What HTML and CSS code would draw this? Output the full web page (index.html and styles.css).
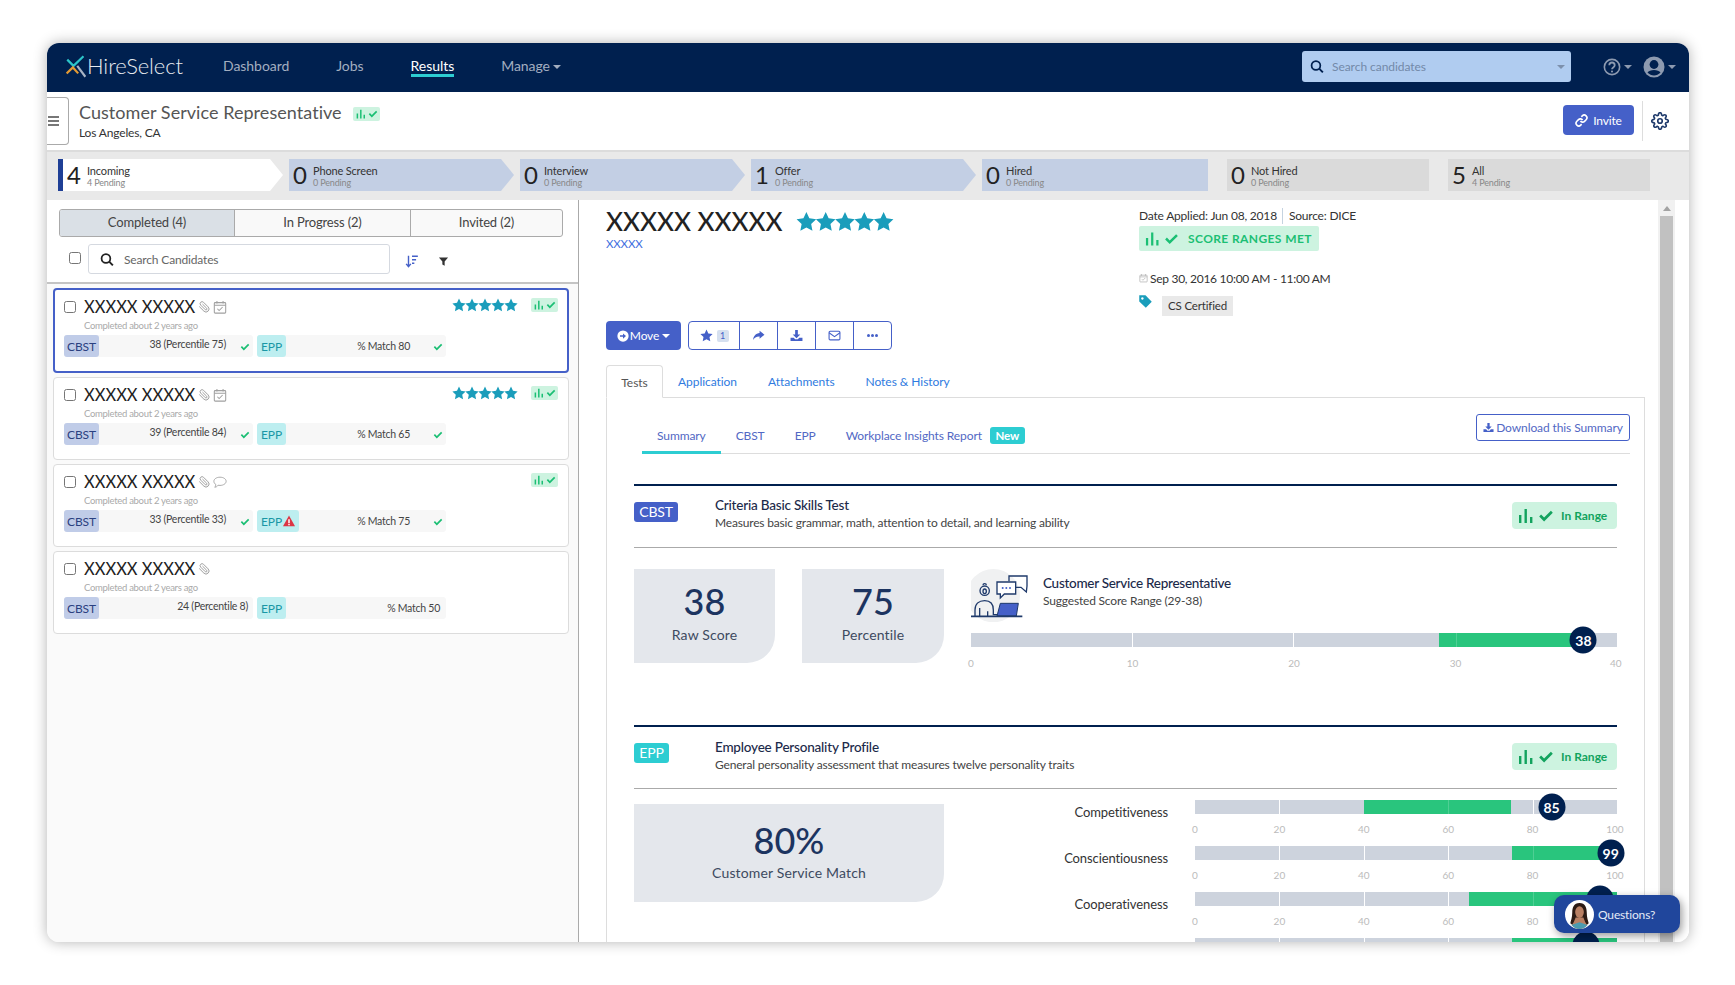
FILE: index.html
```html
<!DOCTYPE html>
<html lang="en">
<head>
<meta charset="utf-8">
<title>HireSelect</title>
<link rel="stylesheet" href="styles.css">
</head>
<body>
<svg class="sprite" aria-hidden="true">
  <symbol id="star" viewBox="0 0 24 24"><path d="M12 1l3.4 7.3 7.9 1-5.8 5.5 1.5 7.9L12 18.8l-7 3.9 1.5-7.9L.7 9.3l7.9-1z"/></symbol>
  <symbol id="bars" viewBox="0 0 16 16"><path d="M1 7h2.4v8H1zM6.5 1h2.4v14H6.5zM12 9h2.4v6H12z"/></symbol>
  <symbol id="check" viewBox="0 0 16 16"><path d="M1.2 8.4l1.9-1.9 3 3L12.900 2.800l1.900 1.900-8.700 8.700z"/></symbol>
  <symbol id="search" viewBox="0 0 16 16"><circle cx="6.800" cy="6.800" r="5" fill="none" stroke="currentColor" stroke-width="2"/><path d="M10.500 10.500l4.200 4.200" stroke="currentColor" stroke-width="2.200"/></symbol>
  <symbol id="clip" viewBox="0 0 24 24"><path fill="none" stroke="currentColor" stroke-width="2" transform="matrix(-1 0 0 1 24 0)" d="M21.440 11.050l-9.190 9.190a6 6 0 0 1-8.490-8.490l9.190-9.190a4 4 0 0 1 5.660 5.660l-9.200 9.190a2 2 0 0 1-2.830-2.830l8.490-8.480"/></symbol>
  <symbol id="cal" viewBox="0 0 16 16"><g fill="none" stroke="currentColor" stroke-width="1.200"><rect x="1.500" y="3" width="13" height="12" rx="1"/><path d="M1.500 6h13M4.500 1v3M11.500 1v3M5 10l2 2 4-4"/></g></symbol>
  <symbol id="bubble" viewBox="0 0 16 16"><path fill="none" stroke="currentColor" stroke-width="1" d="M8 2.500c3.800 0 7 2 7 4.700s-3.200 4.700-7 4.700c-.8 0-1.500-.1-2.200-.2C5 13 3.500 14 2 14c.8-.8 1.300-2 1.300-3C1.900 10 1 8.700 1 7.200 1 4.500 4.200 2.500 8 2.500z"/></symbol>
  <symbol id="link" viewBox="0 0 24 24"><g fill="none" stroke="currentColor" stroke-width="3"><path d="M10 13a5 5 0 0 0 7.540.54l3-3a5 5 0 0 0-7.070-7.070l-1.720 1.710"/><path d="M14 11a5 5 0 0 0-7.540-.54l-3 3a5 5 0 0 0 7.070 7.070l1.710-1.710"/></g></symbol>
  <symbol id="gear" viewBox="0 0 24 24"><g fill="none" stroke="currentColor" stroke-width="2.200"><circle cx="12" cy="12" r="3"/><path d="M19.400 15a1.650 1.650 0 0 0 .33 1.820l.06.06a2 2 0 0 1 0 2.830 2 2 0 0 1-2.830 0l-.06-.06a1.650 1.650 0 0 0-1.820-.33 1.650 1.650 0 0 0-1 1.510V21a2 2 0 0 1-2 2 2 2 0 0 1-2-2v-.09A1.650 1.650 0 0 0 9 19.400a1.650 1.650 0 0 0-1.820.33l-.06.06a2 2 0 0 1-2.830 0 2 2 0 0 1 0-2.830l.06-.06a1.650 1.650 0 0 0 .33-1.820 1.650 1.650 0 0 0-1.510-1H3a2 2 0 0 1-2-2 2 2 0 0 1 2-2h.09A1.650 1.650 0 0 0 4.600 9a1.650 1.650 0 0 0-.33-1.820l-.06-.06a2 2 0 0 1 0-2.830 2 2 0 0 1 2.830 0l.06.06a1.650 1.650 0 0 0 1.820.33H9a1.650 1.650 0 0 0 1-1.510V3a2 2 0 0 1 2-2 2 2 0 0 1 2 2v.09a1.650 1.650 0 0 0 1 1.510 1.650 1.650 0 0 0 1.820-.33l.06-.06a2 2 0 0 1 2.830 0 2 2 0 0 1 0 2.830l-.06.06a1.650 1.650 0 0 0-.33 1.820V9a1.650 1.650 0 0 0 1.510 1H21a2 2 0 0 1 2 2 2 2 0 0 1-2 2h-.09a1.650 1.650 0 0 0-1.510 1z"/></g></symbol>
  <symbol id="download" viewBox="0 0 24 24"><path d="M9.500 2h5v8H19l-7 7-7-7h4.500zM1 16h6l2.500 3h5l2.500-3h6v6H1z"/></symbol>
  <symbol id="share" viewBox="0 0 24 24"><path d="M14 3l9 7.500-9 7.500v-4.300C8 13.500 4.500 15.500 2 20.500 2.500 13 7 8 14 7.300z"/></symbol>
  <symbol id="mail" viewBox="0 0 24 24"><g fill="none" stroke="currentColor" stroke-width="2"><rect x="2" y="4" width="20" height="16" rx="2"/><path d="M2 7l10 7 10-7"/></g></symbol>
  <symbol id="tag" viewBox="0 0 24 24"><path d="M2 2h10l10 10.500L12.500 22 2 12zM7 5a2 2 0 1 0 .01 0z"/></symbol>
  <symbol id="filter" viewBox="0 0 24 24"><path d="M2 3h20l-7.500 9v9.500l-5-3V12z"/></symbol>
  <symbol id="sort" viewBox="0 0 24 24"><path d="M6 2v18M2 16l4 5 4-5M12 3h10M12 9h7M12 15h4" fill="none" stroke="currentColor" stroke-width="2.400"/></symbol>
  <symbol id="warn" viewBox="0 0 16 16"><path fill="#dc3545" d="M8 .8L16 15H0z"/><path fill="#fff" d="M7 5.500h2v5H7zM7 11.500h2v2H7z"/></symbol>
  <symbol id="rating" viewBox="0 0 66 14"><g><use href="#star" width="14" height="14"/><use href="#star" x="13" width="14" height="14"/><use href="#star" x="26" width="14" height="14"/><use href="#star" x="39" width="14" height="14"/><use href="#star" x="52" width="14" height="14"/></g></symbol>
</svg>

<div class="window">
  <header class="nav">
    <a class="logo">
      <svg class="logo-mark" viewBox="0 0 64 72"><g fill="none" stroke-width="7"><path d="M4 14l20 20L56 3" stroke="#2cc4c9"/><path d="M2 58l20-19 17 19" stroke="#e39a33"/><path d="M36 34l26 35" stroke="#a9b4c4"/></g></svg>
      <span class="logo-text">HireSelect</span>
    </a>
    <a class="nav-link">Dashboard</a>
    <a class="nav-link">Jobs</a>
    <a class="nav-link nav-link--active">Results</a>
    <a class="nav-link nav-link--caret">Manage<i class="caret"></i></a>
    <div class="global-search">
      <svg class="global-search__icon"><use href="#search"/></svg>
      <span class="global-search__text">Search candidates</span>
      <i class="caret caret--dim"></i>
    </div>
    <div class="nav-icons">
      <span class="nav-icon"><svg class="help" viewBox="0 0 20 20"><circle cx="10" cy="10" r="8.500" fill="none" stroke="currentColor" stroke-width="1.800"/><path d="M7 8c0-4 6-4 6 0 0 2.500-3 2.500-3 4.500" fill="none" stroke="currentColor" stroke-width="2"/><circle cx="10" cy="15" r="1.200" fill="currentColor"/></svg><i class="caret"></i></span>
      <span class="nav-icon"><svg class="user" viewBox="0 0 22 22"><circle cx="11" cy="11" r="10.500" fill="currentColor"/><circle cx="11" cy="8.500" r="4.400" fill="#00204f"/><path d="M4.500 16.500c1.800-3.500 11.200-3.500 13 0-1.800 2-4.200 3-6.500 3s-4.700-1-6.500-3z" fill="#00204f"/></svg><i class="caret"></i></span>
    </div>
  </header>

  <section class="subhead">
    <button class="menu-toggle"><i></i><i></i><i></i></button>
    <div class="subhead__title">
      <h1 class="job-title">Customer Service Representative <span class="range-chip"><svg><use href="#bars"/></svg><svg><use href="#check"/></svg></span></h1>
      <p class="job-place">Los Angeles, CA</p>
    </div>
    <button class="invite"><svg><use href="#link"/></svg>Invite</button>
    <div class="gear-wrap"><svg class="gear"><use href="#gear"/></svg></div>
  </section>

  <nav class="steps">
    <div class="step step--arrow step--current"><b class="step__n">4</b><div><div class="step__l">Incoming</div><div class="step__s">4 Pending</div></div></div>
    <div class="step step--arrow"><b class="step__n">0</b><div><div class="step__l">Phone Screen</div><div class="step__s">0 Pending</div></div></div>
    <div class="step step--arrow"><b class="step__n">0</b><div><div class="step__l">Interview</div><div class="step__s">0 Pending</div></div></div>
    <div class="step step--arrow"><b class="step__n">1</b><div><div class="step__l">Offer</div><div class="step__s">0 Pending</div></div></div>
    <div class="step step--hired"><b class="step__n">0</b><div><div class="step__l">Hired</div><div class="step__s">0 Pending</div></div></div>
    <div class="step step--grey step--sep"><b class="step__n">0</b><div><div class="step__l">Not Hired</div><div class="step__s">0 Pending</div></div></div>
    <div class="step step--grey step--sep"><b class="step__n">5</b><div><div class="step__l">All</div><div class="step__s">4 Pending</div></div></div>
  </nav>

  <main class="main">
    <aside class="list-pane">
      <div class="list-tools">
        <div class="seg">
          <button class="seg__b seg__b--on">Completed (4)</button>
          <button class="seg__b">In Progress (2)</button>
          <button class="seg__b">Invited (2)</button>
        </div>
        <div class="list-search">
          <input class="cb" type="checkbox">
          <div class="search-box"><svg><use href="#search"/></svg><span>Search Candidates</span></div>
          <svg class="tool tool--sort"><use href="#sort"/></svg>
          <svg class="tool tool--filter"><use href="#filter"/></svg>
        </div>
      </div>
      <div class="cards">
        <article class="card card--on">
          <div class="card__main">
            <div class="card__name"><input class="cb" type="checkbox"><span class="cname">XXXXX XXXXX</span><svg class="mini"><use href="#clip"/></svg><svg class="mini"><use href="#cal"/></svg></div>
            <div class="card__sub">Completed about 2 years ago</div>
            <div class="scores">
              <div class="score"><span class="chip chip--c">CBST</span><span class="score__v score__v--up">38 (Percentile 75)</span><svg class="ok"><use href="#check"/></svg></div>
              <div class="score"><span class="chip chip--e">EPP</span><span class="score__v">% Match 80</span><svg class="ok ok--e"><use href="#check"/></svg></div>
            </div>
          </div>
          <div class="card__side"><svg class="rating"><use href="#rating"/></svg><span class="range-chip range-chip--card"><svg><use href="#bars"/></svg><svg><use href="#check"/></svg></span></div>
        </article>
        <article class="card">
          <div class="card__main">
            <div class="card__name"><input class="cb" type="checkbox"><span class="cname">XXXXX XXXXX</span><svg class="mini"><use href="#clip"/></svg><svg class="mini"><use href="#cal"/></svg></div>
            <div class="card__sub">Completed about 2 years ago</div>
            <div class="scores">
              <div class="score"><span class="chip chip--c">CBST</span><span class="score__v score__v--up">39 (Percentile 84)</span><svg class="ok"><use href="#check"/></svg></div>
              <div class="score"><span class="chip chip--e">EPP</span><span class="score__v">% Match 65</span><svg class="ok ok--e"><use href="#check"/></svg></div>
            </div>
          </div>
          <div class="card__side"><svg class="rating"><use href="#rating"/></svg><span class="range-chip range-chip--card"><svg><use href="#bars"/></svg><svg><use href="#check"/></svg></span></div>
        </article>
        <article class="card">
          <div class="card__main">
            <div class="card__name"><input class="cb" type="checkbox"><span class="cname">XXXXX XXXXX</span><svg class="mini"><use href="#clip"/></svg><svg class="mini"><use href="#bubble"/></svg></div>
            <div class="card__sub">Completed about 2 years ago</div>
            <div class="scores">
              <div class="score"><span class="chip chip--c">CBST</span><span class="score__v score__v--up">33 (Percentile 33)</span><svg class="ok"><use href="#check"/></svg></div>
              <div class="score"><span class="chip chip--e">EPP<svg class="warn"><use href="#warn"/></svg></span><span class="score__v">% Match 75</span><svg class="ok ok--e"><use href="#check"/></svg></div>
            </div>
          </div>
          <div class="card__side card__side--end"><span class="range-chip range-chip--card"><svg><use href="#bars"/></svg><svg><use href="#check"/></svg></span></div>
        </article>
        <article class="card">
          <div class="card__main">
            <div class="card__name"><input class="cb" type="checkbox"><span class="cname">XXXXX XXXXX</span><svg class="mini"><use href="#clip"/></svg></div>
            <div class="card__sub">Completed about 2 years ago</div>
            <div class="scores">
              <div class="score"><span class="chip chip--c">CBST</span><span class="score__v score__v--up score__v--end">24 (Percentile 8)</span></div>
              <div class="score"><span class="chip chip--e">EPP</span><span class="score__v score__v--end">% Match 50</span></div>
            </div>
          </div>
        </article>
      </div>
    </aside>

    <div class="detail">
      <div class="detail__head">
        <div class="who">
          <div class="who__name"><h2 class="bigname">XXXXX XXXXX</h2><svg class="bigstars"><use href="#rating"/></svg></div>
          <a class="who__link">XXXXX</a>
        </div>
        <div class="facts">
          <div class="facts__line"><span class="facts__date">Date Applied: Jun 08, 2018</span><span>Source: DICE</span></div>
          <div class="ranges"><svg><use href="#bars"/></svg><svg><use href="#check"/></svg><span>SCORE RANGES MET</span></div>
          <div class="facts__when"><svg><use href="#cal"/></svg>Sep 30, 2016 10:00 AM - 11:00 AM</div>
          <div class="facts__tags"><svg><use href="#tag"/></svg><span class="tagchip">CS Certified</span></div>
        </div>
      </div>

      <div class="actions">
        <button class="move"><svg viewBox="0 0 16 16"><circle cx="8" cy="8" r="7.500" fill="#fff"/><path d="M4 7h4V4.500L12 8l-4 3.500V9H4z" fill="#4560c8"/></svg>Move<i class="caret caret--white"></i></button>
        <div class="btn-group">
          <button class="gbtn gbtn--star"><svg><use href="#star"/></svg><span class="count">1</span></button>
          <button class="gbtn"><svg><use href="#share"/></svg></button>
          <button class="gbtn"><svg><use href="#download"/></svg></button>
          <button class="gbtn"><svg><use href="#mail"/></svg></button>
          <button class="gbtn gbtn--last"><span class="dots"><i></i><i></i><i></i></span></button>
        </div>
      </div>

      <div class="tabs">
        <a class="tab tab--on">Tests</a>
        <a class="tab">Application</a>
        <a class="tab">Attachments</a>
        <a class="tab">Notes &amp; History</a>
      </div>

      <div class="panel">
        <div class="subtabs">
          <a class="subtab subtab--on">Summary</a>
          <a class="subtab">CBST</a>
          <a class="subtab">EPP</a>
          <a class="subtab">Workplace Insights Report<span class="new">New</span></a>
          <button class="dl"><svg><use href="#download"/></svg>Download this Summary</button>
        </div>

        <section class="sec sec--first">
          <div class="sec__head">
            <span class="sec__badge sec__badge--c">CBST</span>
            <div class="sec__txt"><h3>Criteria Basic Skills Test</h3><p>Measures basic grammar, math, attention to detail, and learning ability</p></div>
            <span class="inrange"><svg class="inrange__b"><use href="#bars"/></svg><svg class="inrange__c"><use href="#check"/></svg>In Range</span>
          </div>
          <div class="sec__body sec__body--cbst">
            <div class="stat stat--a"><b>38</b><span>Raw Score</span></div>
            <div class="stat stat--b"><b>75</b><span>Percentile</span></div>
            <div class="range">
              <div class="range__top">
                <svg class="agent" viewBox="18 20 174 162">
                  <circle cx="85" cy="103" r="80" fill="#f0f1f2"/>
                  <g fill="none" stroke="#1f3a6b" stroke-width="4">
                    <path d="M132 60V44h54v30l-2 18-16-14h-16"/>
                    <path d="M96 62h56v36h-34l-12 12v-12H96z" fill="#fff"/>
                    <circle cx="59" cy="88" r="14"/><path d="M54 72a4 4 0 0 1 10 0"/><ellipse cx="59" cy="90" rx="5" ry="7"/>
                    <path d="M30 164v-18c0-18 12-28 29-28s26 10 26 28v14h14M44 164v-24M68 150v14"/>
                  </g>
                  <path d="M106 126h54l-6 38h-58z" fill="#4560c8" stroke="#1f3a6b" stroke-width="3"/>
                  <path d="M18 165h154" stroke="#1f3a6b" stroke-width="5"/>
                  <g fill="#4560c8"><circle cx="113" cy="80" r="3"/><circle cx="124" cy="80" r="3"/><circle cx="135" cy="80" r="3"/></g>
                </svg>
                <div class="range__txt"><h4>Customer Service Representative</h4><p>Suggested Score Range (29-38)</p></div>
              </div>
              <div class="bar">
                <i class="tick" style="left:24.900%"></i><i class="tick" style="left:49.900%"></i>
                <i class="fill" style="left:72.500%;width:22.500%"></i>
                <i class="tick tick--faint" style="left:75%"></i>
                <i class="marker" style="left:94.800%">38</i>
              </div>
              <div class="scale">
                <span style="left:0%">0</span><span style="left:25%">10</span><span style="left:50%">20</span><span style="left:75%">30</span><span style="left:99.800%">40</span>
              </div>
            </div>
          </div>
        </section>

        <section class="sec">
          <div class="sec__head">
            <span class="sec__badge sec__badge--e">EPP</span>
            <div class="sec__txt"><h3>Employee Personality Profile</h3><p>General personality assessment that measures twelve personality traits</p></div>
            <span class="inrange"><svg class="inrange__b"><use href="#bars"/></svg><svg class="inrange__c"><use href="#check"/></svg>In Range</span>
          </div>
          <div class="sec__body sec__body--epp">
            <div class="stat stat--wide"><b>80%</b><span>Customer Service Match</span></div>
            <div class="traits">
              <div class="trait">
                <div class="trait__l">Competitiveness</div>
                <div class="trait__r">
                  <div class="bar">
                    <i class="tick" style="left:20%"></i><i class="tick" style="left:40%"></i><i class="tick" style="left:60%"></i><i class="tick" style="left:80%"></i>
                    <i class="fill" style="left:40%;width:35%"></i>
                    <i class="tick tick--faint" style="left:60%"></i>
                    <i class="marker" style="left:84.500%">85</i>
                  </div>
                  <div class="scale"><span style="left:0%">0</span><span style="left:20%">20</span><span style="left:40%">40</span><span style="left:60%">60</span><span style="left:80%">80</span><span style="left:99.500%">100</span></div>
                </div>
              </div>
              <div class="trait">
                <div class="trait__l">Conscientiousness</div>
                <div class="trait__r">
                  <div class="bar">
                    <i class="tick" style="left:20%"></i><i class="tick" style="left:40%"></i><i class="tick" style="left:60%"></i>
                    <i class="fill" style="left:75%;width:25%"></i>
                    <i class="tick tick--faint" style="left:80%"></i>
                    <i class="marker" style="left:98.500%">99</i>
                  </div>
                  <div class="scale"><span style="left:0%">0</span><span style="left:20%">20</span><span style="left:40%">40</span><span style="left:60%">60</span><span style="left:80%">80</span><span style="left:99.500%">100</span></div>
                </div>
              </div>
              <div class="trait">
                <div class="trait__l">Cooperativeness</div>
                <div class="trait__r">
                  <div class="bar">
                    <i class="tick" style="left:20%"></i><i class="tick" style="left:40%"></i><i class="tick" style="left:60%"></i>
                    <i class="fill" style="left:65%;width:35%"></i>
                    <i class="tick tick--faint" style="left:80%"></i>
                    <i class="marker" style="left:96%">96</i>
                  </div>
                  <div class="scale"><span style="left:0%">0</span><span style="left:20%">20</span><span style="left:40%">40</span><span style="left:60%">60</span><span style="left:80%">80</span></div>
                </div>
              </div>
              <div class="trait">
                <div class="trait__l"></div>
                <div class="trait__r">
                  <div class="bar">
                    <i class="tick" style="left:20%"></i><i class="tick" style="left:40%"></i><i class="tick" style="left:60%"></i>
                    <i class="fill" style="left:75%;width:25%"></i>
                    <i class="marker" style="left:92.600%"></i>
                  </div>
                </div>
              </div>
            </div>
          </div>
        </section>
      </div>
    </div>

    <div class="scrollbar"><i class="scrollbar__up"></i><i class="scrollbar__thumb"></i></div>
    <div class="rail"></div>
  </main>

  <button class="questions">
    <svg class="avatar" viewBox="0 0 30 30">
      <circle cx="15" cy="15" r="15" fill="#fff"/>
      <path d="M15 3c-6 0-7.500 5-7.500 10 0 5-1.500 9-2 11 3 3 7 5 10 5s6-2 9-5c-.5-2-2-6-2-11 0-5-1.500-10-7.500-10z" fill="#2b1a14"/>
      <ellipse cx="15" cy="12.500" rx="4.500" ry="6" fill="#b98064"/>
      <path d="M11 18h8l2 5 2 3c-2 2-5 4-8 4s-6-2-8-4l2-3z" fill="#b98064"/>
      <path d="M9 25l6-2 6 2 2 1c-2 2-5 4-8 4s-6-2-8-4z" fill="#4b9bb0"/>
    </svg>
    <span>Questions?</span>
  </button>
</div>
</body>
</html>
```
FILE: styles.css
```css
* { box-sizing: border-box; }
html, body { margin: 0; padding: 0; background: #fff; }
body { font-family: "Lato", "Open Sans", sans-serif; font-size: 12px; letter-spacing: -.16px; color: #222; height: 985px; overflow: hidden; }
h1, h2, h3, h4, p { margin: 0; font-weight: 400; }
button { font: inherit; letter-spacing: inherit; cursor: pointer; }
svg { display: block; }
.sprite { position: absolute; width: 0; height: 0; overflow: hidden; }

.window { position: relative; margin: 43px 46px 0 47px; height: 899px; border-radius: 12px; background: #fff; overflow: hidden; display: flex; flex-direction: column; box-shadow: 0 0 14px rgba(0,0,0,.3); }

/* top nav */
.nav { height: 49px; flex: none; background: #00204f; display: flex; align-items: center; color: #a3aec0; font-size: 14px; letter-spacing: -.05px; padding-left: 19px; }
.logo { display: flex; align-items: center; width: 157px; margin-top: -2px; }
.logo-mark { width: 20px; height: 23px; margin-right: 1px; }
.logo-text { font-size: 22px; line-height: 24px; font-weight: 300; color: #e6eaf0; letter-spacing: -.1px; margin-top: -2px; }
.nav-link { margin-right: 47px; height: 49px; line-height: 45px; position: relative; }
.nav-link--active { color: #fff; }
.nav-link--active::after { content: ""; position: absolute; left: 0; right: 0; top: 31px; height: 3px; background: #2dcdd2; }
.caret { display: inline-block; width: 0; height: 0; border: 4px solid transparent; border-top-color: currentColor; border-bottom: 0; margin-left: 3px; vertical-align: 2px; }
.caret--dim { color: #7d90ac; margin-left: auto; }
.caret--white { color: #fff; }
.global-search { margin-left: auto; margin-top: -2px; width: 269px; height: 31px; background: #b0ccf0; border-radius: 3px; display: flex; align-items: center; padding: 0 6px 0 8px; color: #00204f; }
.global-search__icon { width: 14px; height: 15px; }
.global-search__text { font-size: 12px; color: #7389a8; margin-left: 8px; }
.nav-icons { display: flex; align-items: center; width: 118px; padding-left: 32px; gap: 11px; color: #8d9ab0; margin-top: -2px; }
.nav-icon { display: flex; align-items: center; }
.help { width: 18px; height: 18px; }
.user { width: 22px; height: 22px; }

/* sub header */
.subhead { height: 60px; flex: none; border-bottom: 2px solid #dcdcdc; display: flex; align-items: center; position: relative; }
.menu-toggle { width: 22px; height: 48px; background: #fff; border: 1px solid #aaa; border-left: 0; border-radius: 0 4px 4px 0; padding: 0 0 0 1px; display: flex; flex-direction: column; gap: 2px; justify-content: center; }
.menu-toggle i { display: block; width: 11px; height: 2px; background: #777; }
.subhead__title { margin-left: 10px; margin-right: auto; }
.job-title { font-size: 18px; line-height: 22px; letter-spacing: .05px; color: #555; display: flex; align-items: center; gap: 2px; }
.job-place { font-size: 12px; line-height: 16px; color: #333; margin-top: 2px; }
.range-chip { display: inline-flex; align-items: center; gap: 2px; width: 27px; height: 14px; padding: 0 2px 0 3px; background: #cdf3e0; border-radius: 2px; color: #1bbf74; margin-left: 9px; margin-top: 4px; }
.range-chip svg { width: 10px; height: 10px; fill: currentColor; }
.invite { width: 71px; height: 30px; background: #4560c8; color: #fff; border: 0; border-radius: 4px; font-size: 12px; display: flex; align-items: center; justify-content: center; gap: 5px; margin-top: -2px; }
.invite svg { width: 13px; height: 13px; }
.gear-wrap { margin-left: 8px; width: 47px; height: 40px; border-left: 1px solid #ddd; display: flex; align-items: center; padding-left: 8px; }
.gear { width: 18px; height: 18px; color: #1f3a6b; }

/* pipeline */
.steps { height: 48px; flex: none; background: #e9e9e9; display: flex; gap: 6px; padding: 7px 0 0 11px; }
.step { width: 225px; height: 32px; background: #c3cfe4; display: flex; align-items: center; gap: 5px; padding-left: 3px; }
.step--arrow { clip-path: polygon(0 0, calc(100% - 13px) 0, 100% 50%, calc(100% - 13px) 100%, 0 100%); }
.step--current { background: #fff; border-left: 5px solid #1f3f96; }
.step--hired { width: 226px; }
.step--grey { width: 202px; background: #dadada; }
.step--sep { margin-left: 13px; }
.step__n { font-size: 24px; font-weight: 400; color: #222; line-height: 1; width: 16px; text-align: center; }
.step__l { font-size: 11px; line-height: 12px; color: #333; margin-top: 3px; }
.step__s { font-size: 9px; line-height: 11px; color: #888; }

/* main */
.main { flex: 1; display: flex; min-height: 0; overflow: hidden; }
.list-pane { width: 532px; flex: none; background: #fafafa; border-right: 1px solid #aaa; }
.list-tools { height: 84px; background: #fff; border-bottom: 2px solid #c4c4c4; padding: 9px 0 0 12px; }
.seg { display: flex; width: 504px; height: 28px; border: 1px solid #aaa; border-radius: 3px; overflow: hidden; background: #f9f9f9; }
.seg__b { flex: 1 1 0; border: 0; background: transparent; font-size: 13px; line-height: 24px; padding: 0 0 2px; color: #444; border-left: 1px solid #aaa; }
.seg__b:first-child { border-left: 0; flex: 0 0 174px; }
.seg__b:last-child { flex: 0 0 152px; }
.seg__b--on { background: #dae0e6; }
.list-search { display: flex; align-items: center; margin-top: 7px; height: 30px; }
.cb { width: 12px; height: 12px; margin: 0; flex: none; }
.list-search .cb { margin-left: 10px; margin-top: -2px; }
.search-box { width: 302px; height: 30px; margin-left: 7px; border: 1px solid #d5d9e0; border-radius: 3px; background: #fff; display: flex; align-items: center; padding-left: 11px; color: #333; font-size: 12px; }
.search-box svg { width: 14px; height: 15px; color: #222; margin-right: 10px; }
.search-box span { color: #666; }
.tool { flex: none; margin-top: 4px; }
.tool--sort { width: 14px; height: 15px; color: #4560c8; margin-left: 15px; }
.tool--filter { width: 11px; height: 11px; color: #333; margin-left: 19px; fill: currentColor; }

.cards { padding: 4px 9px 0 6px; display: flex; flex-direction: column; gap: 4px; }
.card { display: flex; gap: 5px; height: 83px; border: 1px solid #dcdcdc; border-radius: 4px; background: #fff; padding: 8px 10px 0 10px; }
.card--on { height: 85px; border: 2px solid #4560c8; padding: 8px 9px 0 9px; }
.card__main { width: 383px; flex: none; }
.card__name { display: flex; align-items: center; height: 18px; }
.cname { font-size: 16.500px; line-height: 18px; color: #222; margin-left: 8px; white-space: nowrap; letter-spacing: 0; }
.mini { width: 12px; height: 12px; color: #a0a0a0; margin-left: 3px; }
.mini + .mini { width: 14px; height: 14px; margin-left: 3px; }
.card__sub { font-size: 9.500px; line-height: 13px; letter-spacing: -.3px; color: #aaa; margin: 3px 0 3px 20px; height: 13px; }
.scores { display: flex; gap: 4px; }
.score { width: 189px; height: 22px; display: flex; align-items: center; background: #f7f7f7; border-radius: 3px; font-size: 10.500px; letter-spacing: -.25px; color: #444; flex: none; }
.chip { height: 22px; padding: 0 4px; display: flex; align-items: center; border-radius: 3px; font-size: 12px; flex: none; letter-spacing: -.1px; }
.chip--c { width: 35px; background: #c0cce8; color: #2a4080; justify-content: center; padding: 0; }
.chip--e { min-width: 29px; background: #bdeef0; color: #1a97a5; }
.warn { width: 12px; height: 12px; margin-left: 1px; }
.score__v { margin-left: auto; }
.score__v--up { margin-top: -4px; }
.score__v--end { margin-right: 6px; }
.score__v--up.score__v--end { margin-right: 5px; }
.ok { width: 10px; height: 10px; fill: #1bbf74; margin: 1px 3px 0 14px; flex: none; }
.ok--e { margin-left: 23px; }
.card__side { display: flex; flex: 1; align-items: flex-start; justify-content: space-between; }
.card__side--end { justify-content: flex-end; }
.rating { width: 66px; height: 14px; fill: #1a9dbb; }
.range-chip--card { margin-left: 0; margin-top: 0; }

/* detail */
.detail { flex: 1; min-width: 0; padding: 0 13px 0 27px; overflow: hidden; }
.detail__head { display: flex; height: 121px; }
.who { width: 533px; flex: none; padding-top: 8px; }
.who__name { display: flex; align-items: center; height: 26px; }
.bigname { font-size: 26px; line-height: 26px; letter-spacing: 0; color: #222; font-weight: 500; white-space: nowrap; }
.bigstars { width: 98px; height: 21px; fill: #1a9dbb; margin-left: 13px; }
.who__link { display: block; font-size: 11.500px; line-height: 14px; color: #3f6fe0; margin-top: 3px; }
.facts { padding-top: 8px; }
.facts__line { font-size: 12px; line-height: 16px; letter-spacing: -.2px; color: #333; display: flex; height: 16px; }
.facts__date { border-right: 1px solid #c5d3e0; padding-right: 5px; margin-right: 6px; }
.ranges { width: 180px; height: 25px; margin-top: 2px; background: #cdf3e0; border-radius: 2px; display: flex; align-items: center; color: #1bbf74; padding-left: 6px; font-size: 12px; font-weight: 700; letter-spacing: .4px; }
.ranges svg { width: 15px; height: 16px; fill: currentColor; margin-right: 4px; }
.ranges svg:nth-child(2) { margin-right: 9px; }
.facts__when { display: flex; align-items: center; height: 16px; margin-top: 19px; font-size: 12px; letter-spacing: -.28px; color: #333; }
.facts__when svg { width: 9px; height: 10px; color: #aaa; margin-right: 2px; }
.facts__tags { display: flex; align-items: flex-start; margin-top: 9px; }
.facts__tags svg { width: 15px; height: 15px; fill: #1a9dbb; margin-right: 9px; margin-left: -1px; margin-top: -1px; }
.tagchip { height: 20px; line-height: 20px; padding: 0 6px; background: #e9e9e9; font-size: 11.500px; margin-top: 1px; color: #333; }

.actions { display: flex; gap: 7px; height: 29px; margin-bottom: 15px; }
.move { width: 75px; height: 29px; background: #4560c8; border: 0; border-radius: 4px; color: #fff; font-size: 12px; display: flex; align-items: center; justify-content: center; padding: 0; }
.move svg { width: 12px; height: 12px; margin-right: 1px; }
.btn-group { display: flex; height: 29px; border: 1px solid #4560c8; border-radius: 4px; background: #fff; color: #4560c8; }
.gbtn { width: 38px; border: 0; border-right: 1px solid #4560c8; background: transparent; padding: 0; display: flex; align-items: center; justify-content: center; color: #4560c8; fill: #4560c8; }
.gbtn svg { width: 13px; height: 13px; }
.gbtn--star { width: 51px; gap: 4px; }
.gbtn--last { width: 37px; border-right: 0; }
.count { width: 12px; height: 12px; background: #d6e0ef; border-radius: 2px; font-size: 9px; line-height: 12px; }
.dots { display: flex; gap: 1px; }
.dots i { width: 3px; height: 3px; border-radius: 50%; background: #4560c8; }

.tabs { display: flex; height: 33px; font-size: 12px; letter-spacing: -.05px; color: #2f7be0; }
.tab { width: 57px; line-height: 33px; text-align: center; position: relative; z-index: 1; }
.tab + .tab { width: auto; margin-left: 15px; padding: 0; }
.tab:nth-child(3), .tab:nth-child(4) { margin-left: 31px; }
.tab--on { color: #555; border: 1px solid #ddd; border-bottom: 1px solid #fff; border-radius: 4px 4px 0 0; background: #fff; height: 33px; }
.panel { border: 1px solid #ddd; border-bottom: 0; margin-top: -1px; padding: 16px 27px 0 27px; }
.subtabs { display: flex; align-items: flex-end; height: 40px; border-bottom: 1px solid #ddd; margin: 0 -13px 0 8px; font-size: 12px; letter-spacing: -.1px; color: #5268c4; position: relative; }
.subtab { height: 37px; padding: 2px 15px 0; white-space: nowrap; display: flex; align-items: center; border-bottom: 3px solid transparent; margin-bottom: -1px; }
.subtab--on { border-bottom-color: #2dcdd2; }
.new { width: 35px; height: 17px; background: #2dcdd2; border-radius: 3px; color: #fff; font-size: 11.500px; font-weight: 700; line-height: 17px; text-align: center; margin-left: 8px; letter-spacing: 0; }
.dl { margin-left: auto; align-self: flex-start; width: 154px; height: 27px; background: #fff; border: 1px solid #4560c8; border-radius: 3px; color: #5268c4; font-size: 12px; display: flex; align-items: center; justify-content: center; padding: 0; white-space: nowrap; }
.dl svg { width: 11px; height: 11px; fill: #4560c8; margin-right: 2px; }

.sec { border-top: 2px solid #00204f; }
.sec--first { margin-top: 30px; }
.sec__head { height: 62px; border-bottom: 1px solid #aaa; display: flex; align-items: flex-start; }
.sec__badge { width: 44px; height: 20px; margin-top: 16px; border-radius: 3px; color: #fff; font-size: 14px; line-height: 20px; text-align: center; flex: none; }
.sec__badge--c { background: #4560c8; }
.sec__badge--e { width: 35px; background: #2dcdd2; }
.sec__txt { flex: 1; padding-top: 11px; }
.sec__badge--c + .sec__txt { margin-left: 37px; }
.sec__badge--e + .sec__txt { margin-left: 46px; padding-top: 12px; }
.sec__txt h3 { font-size: 13.500px; line-height: 16px; letter-spacing: -.2px; color: #1c2a4a; font-weight: 500; }
.sec__txt p { font-size: 12px; line-height: 16px; letter-spacing: -.18px; color: #444; margin-top: 2px; }
.inrange { width: 105px; height: 27px; margin-top: 16px; background: #cdf3e0; border-radius: 4px; color: #12a35e; display: flex; align-items: center; font-size: 12px; font-weight: 700; letter-spacing: 0; padding-left: 6px; flex: none; }
.inrange__b { width: 16px; height: 16px; fill: currentColor; }
.inrange__c { width: 16px; height: 16px; fill: currentColor; margin: 0 7px 0 4px; }

.sec__body { display: flex; }
.sec__body--cbst { padding: 21px 0 62px; height: 177px; }
.stat { height: 94px; background: #e4e7ec; border-radius: 0 0 28px 0; display: flex; flex-direction: column; align-items: center; color: #1c3460; flex: none; letter-spacing: 0; }
.stat b { font-size: 36px; font-weight: 500; line-height: 36px; margin-top: 14px; }
.stat span { font-size: 14px; line-height: 18px; letter-spacing: .15px; color: #3d4a60; margin-top: 7px; }
.stat--a { width: 141px; }
.stat--b { width: 142px; margin-left: 27px; }
.stat--wide { width: 310px; height: 98px; margin-top: 15px; }
.stat--wide b { margin-top: 18px; }
.stat--wide span { margin-top: 6px; }
.range { flex: 1; margin-left: 27px; height: 94px; }
.range__top { display: flex; height: 65px; margin-top: -1px; }
.range .scale { margin-top: 10px; }
.agent { width: 58px; height: 54px; }
.range__txt { margin-left: 14px; padding-top: 7px; }
.range__txt h4 { font-size: 13.500px; line-height: 16px; letter-spacing: -.28px; color: #1c2a4a; font-weight: 500; }
.range__txt p { font-size: 12px; line-height: 16px; letter-spacing: -.18px; color: #444; margin-top: 2px; }

.bar { position: relative; height: 14px; background: #cdd3dd; }
.tick { position: absolute; top: 0; bottom: 0; width: 1px; background: #fff; }
.tick--faint { background: rgba(255,255,255,.18); }
.fill { position: absolute; top: 0; bottom: 0; background: #29c57d; }
.marker { position: absolute; top: 50%; width: 27px; height: 27px; border-radius: 50%; background: #00204f; color: #fff; font-family: "Liberation Sans Narrow", "Lato", sans-serif; font-size: 14px; font-style: normal; font-weight: 700; line-height: 27px; letter-spacing: 0; text-align: center; transform: translate(-50%, -50%); }
.scale { position: relative; height: 12px; margin-top: 9px; font-size: 10px; line-height: 12px; letter-spacing: 0; color: #bbb; }
.scale span { position: absolute; top: 0; transform: translateX(-50%); }

.traits { flex: 1; margin-top: 11px; }
.trait { display: flex; height: 46px; }
.trait__l { width: 224px; text-align: right; font-size: 13px; line-height: 24px; letter-spacing: -.1px; color: #333; flex: none; }
.trait__r { margin-left: 27px; flex: 1; }

.scrollbar { width: 17px; flex: none; background: #f1f1f1; padding: 6px 2px 0; }
.scrollbar__up { display: block; width: 0; height: 0; margin: 0 auto 5px; border: 4px solid transparent; border-bottom: 5px solid #a3a3a3; border-top: 0; }
.scrollbar__thumb { display: block; height: 800px; background: #c1c1c1; }
.rail { width: 14px; flex: none; background: #fff; }

.questions { position: absolute; right: 9px; bottom: 9px; width: 126px; height: 38px; background: #20469c; border: 0; border-radius: 10px; color: #e4eaf7; font-size: 12px; display: flex; align-items: center; padding: 0 0 0 11px; gap: 4px; box-shadow: 2px 3px 9px rgba(0,0,0,.4); }
.avatar { width: 29px; height: 29px; }
```
